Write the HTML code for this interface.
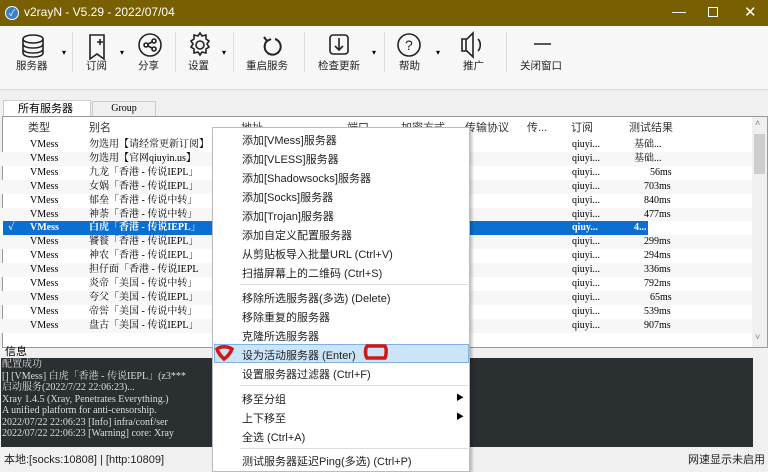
<!DOCTYPE html>
<html><head><meta charset="utf-8"><style>
*{margin:0;padding:0;box-sizing:border-box}
body{width:768px;height:468px;overflow:hidden;background:#f0f0f0;font-family:"Liberation Sans","Noto Sans CJK SC",sans-serif;font-size:11px;color:#000;position:relative}
.a{position:absolute;white-space:nowrap}
.mono{font-family:"Liberation Serif","Noto Serif CJK SC",serif}
.tb{position:absolute;top:30px;text-align:center;font-size:10.5px;color:#222}
.sep{position:absolute;top:32px;width:1px;height:40px;background:#ddd}
.row{position:absolute;left:0;width:752px;height:14px;font-size:10px;line-height:14px}
.row span{position:absolute}
.mi{position:absolute;left:242px;font-size:11px;color:#222}
</style></head><body>
<div class="a" style="left:0;top:0;width:768px;height:26px;background:#775f02"></div>
<div class="a" style="left:5px;top:6px;width:14px;height:14px;border-radius:50%;background:#3a7fc8;border:1px solid #fff;color:#fff;font-size:9px;line-height:12px;text-align:center">✓</div>
<div class="a" style="left:24px;top:5px;color:#fff;font-size:12px">v2rayN - V5.29 - 2022/07/04</div>
<div class="a" style="left:672px;top:3px;color:#fff;font-size:14px">—</div>
<div class="a" style="left:708px;top:7px;width:10px;height:10px;border:1px solid #fff"></div>
<div class="a" style="left:744px;top:3px;color:#fff;font-size:15px">✕</div>
<div class="a" style="left:0;top:26px;width:768px;height:64px;background:#f7f7f7;border-bottom:1px solid #ddd"></div>
<svg class="a" style="left:0;top:27px" width="768" height="50" fill="none" stroke="#222" stroke-width="1.6">
<ellipse cx="33" cy="12" rx="10" ry="4"/><path d="M23 12v14c0 2.5 4.5 4 10 4s10-1.5 10-4V12M23 17c0 2.5 4.5 4 10 4s10-1.5 10-4M23 22c0 2.5 4.5 4 10 4s10-1.5 10-4"/>
<path d="M90 8h14v24l-7-5-7 5z"/><path d="M100 12v6M97 15h6"/>
<circle cx="150" cy="18" r="11"/><circle cx="146" cy="18" r="2"/><circle cx="154" cy="14" r="2"/><circle cx="154" cy="22" r="2"/><path d="M148 17l4-2M148 19l4 2"/>
<circle cx="200" cy="18" r="4"/><path d="M200 6l2 3 4-1 0 4 3 2-2 3 2 3-3 2 0 4-4-1-2 3-2-3-4 1 0-4-3-2 2-3-2-3 3-2 0-4 4 1z"/>
<path d="M275 12a8 8 0 1 1-8 2" stroke-width="2"/><path d="M264 10l3 4 4-2" stroke-width="2"/>
<rect x="330" y="8" width="18" height="19" rx="3"/><path d="M339 11v12M335 19l4 4 4-4"/>
<circle cx="409" cy="18" r="11"/><text x="405" y="23" font-size="14" fill="#222" stroke="none" font-family="Liberation Sans">?</text>
<path d="M462 12h5l6-6v24l-6-6h-5zM466 12v12M478 12c3 3 3 9 0 12"/>
<path d="M534 17h17"/>
</svg>
<div class="a" style="left:62px;top:48px;font-size:8px">▾</div>
<div class="a" style="left:120px;top:48px;font-size:8px">▾</div>
<div class="a" style="left:222px;top:48px;font-size:8px">▾</div>
<div class="a" style="left:372px;top:48px;font-size:8px">▾</div>
<div class="a" style="left:436px;top:48px;font-size:8px">▾</div>
<div class="tb" style="left:16px;top:58px">服务器</div>
<div class="tb" style="left:86px;top:58px">订阅</div>
<div class="tb" style="left:138px;top:58px">分享</div>
<div class="tb" style="left:188px;top:58px">设置</div>
<div class="tb" style="left:246px;top:58px">重启服务</div>
<div class="tb" style="left:318px;top:58px">检查更新</div>
<div class="tb" style="left:399px;top:58px">帮助</div>
<div class="tb" style="left:463px;top:58px">推广</div>
<div class="tb" style="left:520px;top:58px">关闭窗口</div>
<div class="sep" style="left:72px"></div><div class="sep" style="left:175px"></div><div class="sep" style="left:233px"></div><div class="sep" style="left:304px"></div><div class="sep" style="left:384px"></div><div class="sep" style="left:506px"></div>
<div class="a" style="left:3px;top:100px;width:88px;height:17px;background:#fff;border:1px solid #ccc;border-bottom:none;font-size:11px;padding-left:14px;line-height:16px">所有服务器</div>
<div class="a mono" style="left:92px;top:101px;width:64px;height:15px;background:#f0f0f0;border:1px solid #ccc;border-bottom:none;font-size:10px;text-align:center;line-height:14px">Group</div>
<div class="a" style="left:2px;top:116px;width:766px;height:232px;background:#fff;border:1px solid #999"></div>
<div class="a" style="left:3px;top:117px;width:749px;height:20px;background:#fff;font-size:11px;line-height:22px;color:#333">
<span class="a" style="left:25px">类型</span><span class="a" style="left:86px">别名</span><span class="a" style="left:238px">地址</span><span class="a" style="left:344px">端口</span><span class="a" style="left:398px">加密方式</span><span class="a" style="left:462px">传输协议</span><span class="a" style="left:524px">传...</span><span class="a" style="left:568px">订阅</span><span class="a" style="left:626px">测试结果</span></div>
<div class="a" style="left:752px;top:117px;width:15px;height:230px;background:#f0f0f0"></div>
<div class="a" style="left:754px;top:134px;width:11px;height:40px;background:#cdcdcd"></div>
<div class="a" style="left:755px;top:118px;font-size:9px;color:#888">˄</div>
<div class="a" style="left:755px;top:332px;font-size:9px;color:#888">˅</div>
<div class="row mono" style="top:138px"><span style="left:30px">VMess</span><span style="left:89px">勿选用【请经常更新订阅】</span><span style="left:456px">cp</span><span style="left:572px">qiuyi...</span><span style="left:634px">基础...</span></div>
<div class="row mono" style="top:152px;background:#f7f7f7"><span style="left:30px">VMess</span><span style="left:89px">勿选用【官网qiuyin.us】</span><span style="left:456px">s</span><span style="left:572px">qiuyi...</span><span style="left:634px">基础...</span></div>
<div class="row mono" style="top:166px"><span style="left:30px">VMess</span><span style="left:89px">九龙「香港 - 传说IEPL」</span><span style="left:456px">s</span><span style="left:572px">qiuyi...</span><span style="left:650px">56ms</span></div>
<div class="row mono" style="top:180px;background:#f7f7f7"><span style="left:30px">VMess</span><span style="left:89px">女娲「香港 - 传说IEPL」</span><span style="left:456px">cp</span><span style="left:572px">qiuyi...</span><span style="left:644px">703ms</span></div>
<div class="row mono" style="top:194px"><span style="left:30px">VMess</span><span style="left:89px">郁垒「香港 - 传说中转」</span><span style="left:456px">cp</span><span style="left:572px">qiuyi...</span><span style="left:644px">840ms</span></div>
<div class="row mono" style="top:208px;background:#f7f7f7"><span style="left:30px">VMess</span><span style="left:89px">神荼「香港 - 传说中转」</span><span style="left:456px">cp</span><span style="left:572px">qiuyi...</span><span style="left:644px">477ms</span></div>
<div class="row mono" style="top:221px;height:14px;background:#fff;color:#fff;font-weight:bold"><div class="a" style="left:3px;top:0;width:645px;height:14px;background:#0a6fd0"></div><span style="left:8px">✓</span><span style="left:30px">VMess</span><span style="left:89px">白虎「香港 - 传说IEPL」</span><span style="left:456px">s</span><span style="left:572px">qiuy...</span><span style="left:634px">4...</span></div>
<div class="row mono" style="top:235px;background:#f7f7f7"><span style="left:30px">VMess</span><span style="left:89px">饕餮「香港 - 传说IEPL」</span><span style="left:456px">s</span><span style="left:572px">qiuyi...</span><span style="left:644px">299ms</span></div>
<div class="row mono" style="top:249px"><span style="left:30px">VMess</span><span style="left:89px">神农「香港 - 传说IEPL」</span><span style="left:456px">cp</span><span style="left:572px">qiuyi...</span><span style="left:644px">294ms</span></div>
<div class="row mono" style="top:263px;background:#f7f7f7"><span style="left:30px">VMess</span><span style="left:89px">担仔面「香港 - 传说IEPL</span><span style="left:456px">s</span><span style="left:572px">qiuyi...</span><span style="left:644px">336ms</span></div>
<div class="row mono" style="top:277px"><span style="left:30px">VMess</span><span style="left:89px">炎帝「美国 - 传说中转」</span><span style="left:456px">s</span><span style="left:572px">qiuyi...</span><span style="left:644px">792ms</span></div>
<div class="row mono" style="top:291px;background:#f7f7f7"><span style="left:30px">VMess</span><span style="left:89px">夸父「美国 - 传说IEPL」</span><span style="left:456px">cp</span><span style="left:572px">qiuyi...</span><span style="left:650px">65ms</span></div>
<div class="row mono" style="top:305px"><span style="left:30px">VMess</span><span style="left:89px">帝喾「美国 - 传说中转」</span><span style="left:456px">s</span><span style="left:572px">qiuyi...</span><span style="left:644px">539ms</span></div>
<div class="row mono" style="top:319px;background:#f7f7f7"><span style="left:30px">VMess</span><span style="left:89px">盘古「美国 - 传说IEPL」</span><span style="left:456px">cp</span><span style="left:572px">qiuyi...</span><span style="left:644px">907ms</span></div>
<div class="a" style="left:5px;top:343px;font-size:11px">信息</div>
<div class="a mono" style="left:1px;top:358px;width:752px;height:89px;background:#2a2f32;color:#ddd;font-size:10px;line-height:11.5px;padding:1px 1px;overflow:hidden">配置成功<br>[] [VMess] 白虎「香港 - 传说IEPL」(z3***<br>启动服务(2022/7/22 22:06:23)...<br>Xray 1.4.5 (Xray, Penetrates Everything.)<br>A unified platform for anti-censorship.<br>2022/07/22 22:06:23 [Info] infra/conf/ser<br>2022/07/22 22:06:23 [Warning] core: Xray</div>
<div class="a" style="left:753px;top:358px;width:15px;height:89px;background:#f0f0f0"></div>
<div class="a" style="left:4px;top:451px;font-size:11px;color:#222">本地:[socks:10808] | [http:10809]</div>
<div class="a" style="left:688px;top:451px;font-size:11px;color:#222">网速显示未启用</div>
<div class="a" style="left:212px;top:127px;width:258px;height:345px;background:#fff;border:1px solid #bbb;box-shadow:2px 2px 3px rgba(0,0,0,.25)"></div>
<div class="mi" style="top:132px">添加[VMess]服务器</div>
<div class="mi" style="top:151px">添加[VLESS]服务器</div>
<div class="mi" style="top:170px">添加[Shadowsocks]服务器</div>
<div class="mi" style="top:189px">添加[Socks]服务器</div>
<div class="mi" style="top:208px">添加[Trojan]服务器</div>
<div class="mi" style="top:227px">添加自定义配置服务器</div>
<div class="mi" style="top:246px">从剪贴板导入批量URL (Ctrl+V)</div>
<div class="mi" style="top:265px">扫描屏幕上的二维码 (Ctrl+S)</div>
<div class="a" style="left:240px;top:284px;width:228px;height:1px;background:#ddd"></div>
<div class="mi" style="top:290px">移除所选服务器(多选) (Delete)</div>
<div class="mi" style="top:309px">移除重复的服务器</div>
<div class="mi" style="top:328px">克隆所选服务器</div>
<div class="a" style="left:214px;top:344px;width:255px;height:19px;background:#cce4f7;border:1px solid #7fb2e0"></div>
<div class="mi" style="top:347px">设为活动服务器 (Enter)</div>
<div class="mi" style="top:366px">设置服务器过滤器 (Ctrl+F)</div>
<div class="a" style="left:240px;top:385px;width:228px;height:1px;background:#ddd"></div>
<div class="mi" style="top:391px">移至分组</div><div class="a" style="left:456px;top:392px;font-size:8px">▶</div>
<div class="mi" style="top:410px">上下移至</div><div class="a" style="left:456px;top:411px;font-size:8px">▶</div>
<div class="mi" style="top:429px">全选 (Ctrl+A)</div>
<div class="a" style="left:240px;top:448px;width:228px;height:1px;background:#ddd"></div>
<div class="mi" style="top:453px">测试服务器延迟Ping(多选) (Ctrl+P)</div>
<svg class="a" style="left:212px;top:340px" width="180" height="26" fill="none" stroke="#d01818" stroke-width="3.5">
<path d="M5 9c4-3 10-3 15 0c-2 5-5 8-8 10c-3-3-6-6-7-10z"/>
<path d="M155 6h18c2 3 1 10 0 12h-18c-2-3-2-9 0-12z"/>
</svg>
</body></html>
